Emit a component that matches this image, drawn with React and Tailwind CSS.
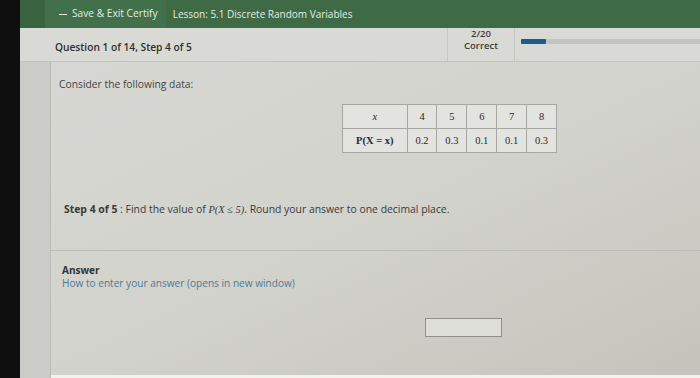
const font = { fontFamily: '"Open Sans", "Liberation Sans", sans-serif' };

const xs = ["4", "5", "6", "7", "8"];
const ps = ["0.2", "0.3", "0.1", "0.1", "0.3"];

export default function App() {
  return (
    <div
      className="flex h-[378px] w-[700px] overflow-hidden bg-[#111]"
      style={font}
    >
      <div className="w-[20px] shrink-0 bg-[#0f0f0f]" />

      <div className="flex flex-1 flex-col">
        {/* top green bar */}
        <div className="flex h-[28px] shrink-0 items-center bg-[#3e6a45] text-[#e4ece4]">
          <div className="flex h-full w-[25px] bg-[#39633f]" />
          <div className="flex h-full items-center gap-[5px] bg-[#41704a] pl-[14px] pr-[8px] text-[10.2px]">
            <span className="mt-[1px] h-[1.5px] w-[8px] bg-[#e4ece4]" />
            <span>Save &amp; Exit Certify</span>
          </div>
          <span className="ml-[7px] text-[10px]">Lesson: 5.1 Discrete Random Variables</span>
        </div>

        {/* question header */}
        <div className="flex h-[34px] shrink-0 items-stretch border-b border-[#c4c4bf] bg-[#d9dad5]">
          <div className="flex w-[427px] items-end pb-[6px] pl-[35px] text-[10.2px] font-semibold text-[#2f2f2f]">
            Question 1 of 14, Step 4 of 5
          </div>
          <div className="flex w-[68px] flex-col items-center border-x border-[#c8c8c3] text-[9.5px] font-semibold leading-[12px] text-[#3a3a3a]">
            <span>2/20</span>
            <span>Correct</span>
          </div>
          <div className="flex flex-1 items-start pl-[6px] pt-[11px]">
            <div className="flex h-[5px] flex-1 bg-[#c3c4c2]">
              <div className="h-full w-[25px] rounded-[1px] bg-[#1c5a92]" />
            </div>
          </div>
        </div>

        {/* body */}
        <div className="flex flex-1 bg-gradient-to-br from-[#d7d8d3] via-[#d3d3cd] to-[#c4c4bc]">
          <div className="w-[30px] shrink-0 bg-[#cbccc7]" />
          <div className="flex flex-1 flex-col border-l border-[#bdbdb8]">
            <div className="flex flex-col items-start border-b border-[#bdbdb7] pb-[33px] pl-[8px] pt-[15px]">
              <p className="text-[10.3px] text-[#444]">Consider the following data:</p>

              <table
                className="ml-[283px] mt-[12px] w-[215px] border-collapse border border-[#8e8e8a] bg-[#e3e3df] text-[10.5px] text-[#2a2a2a]"
                style={{ fontFamily: '"Liberation Serif", serif' }}
              >
                <tbody>
                  <tr className="h-[24px]">
                    <td className="w-[65px] border border-[#a6a6a2] text-center italic">x</td>
                    {xs.map((x) => (
                      <td key={x} className="w-[30px] border border-[#a6a6a2] text-center">
                        {x}
                      </td>
                    ))}
                  </tr>
                  <tr className="h-[24px]">
                    <td className="border border-[#a6a6a2] text-center font-bold">P(X = x)</td>
                    {ps.map((p, i) => (
                      <td key={i} className="border border-[#a6a6a2] text-center">
                        {p}
                      </td>
                    ))}
                  </tr>
                </tbody>
              </table>

              <p className="ml-[5px] mt-[49px] text-[10.4px] leading-[14px] text-[#3a3a3a]">
                <span className="font-bold">Step 4 of 5</span> : Find the value of{" "}
                <span className="italic" style={{ fontFamily: '"Liberation Serif", serif' }}>
                  P(X ≤ 5)
                </span>
                . Round your answer to one decimal place.
              </p>
            </div>

            <div className="flex flex-1 flex-col items-start pl-[11px] pt-[13px]">
              <p className="text-[10px] font-bold leading-[12px] text-[#333]">Answer</p>
              <p className="mt-[1px] text-[10.1px] leading-[12px] text-[#4b7a96]">
                How to enter your answer (opens in new window)
              </p>
              <div className="ml-[363px] mt-[29px] h-[19px] w-[77px] border border-[#8f8f8b] bg-[#deded9]" />
            </div>
            <div className="h-[3px] bg-[#f2f2ef]" />
          </div>
        </div>
      </div>
    </div>
  );
}
